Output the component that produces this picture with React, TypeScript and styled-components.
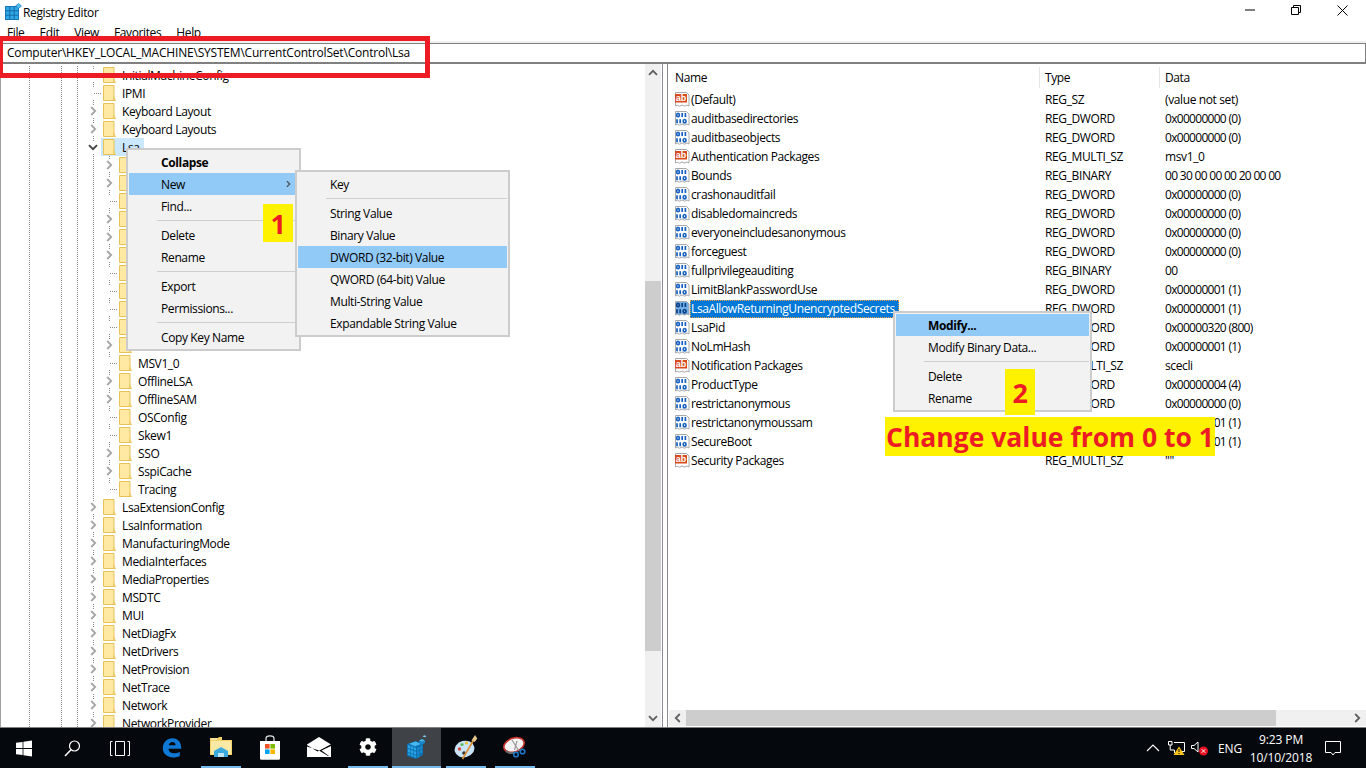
import styled, { createGlobalStyle, css } from 'styled-components';
import { FaCog } from 'react-icons/fa';

const uiFont = `'Open Sans', 'Noto Sans', sans-serif`;

const GlobalStyle = createGlobalStyle`
  html, body {
    margin: 0;
    padding: 0;
    background: #fff;
  }
  body {
    font-family: ${uiFont};
    font-size: 12px;
    letter-spacing: -0.38px;
    color: #000;
    overflow: hidden;
  }
`;

type TreeRow = {
  label: string;
  level: 1 | 2;
  kind: 'closed' | 'open' | 'leaf';
  selected?: boolean;
  last?: boolean;
};

const level1 = (label: string, kind: TreeRow['kind'] = 'closed'): TreeRow => ({ label, level: 1, kind });
const level2 = (label: string, kind: TreeRow['kind'] = 'closed'): TreeRow => ({ label, level: 2, kind });

const treeRows: TreeRow[] = [
  level1('InitialMachineConfig', 'leaf'),
  level1('IPMI', 'leaf'),
  level1('Keyboard Layout'),
  level1('Keyboard Layouts'),
  { label: 'Lsa', level: 1, kind: 'open', selected: true },
  // these keys sit behind the context menu, only the folders peek out
  level2(''),
  level2(''),
  level2('', 'leaf'),
  level2(''),
  level2(''),
  level2(''),
  level2('', 'leaf'),
  level2('', 'leaf'),
  level2('', 'leaf'),
  level2('', 'leaf'),
  level2(''),
  level2('MSV1_0', 'leaf'),
  level2('OfflineLSA'),
  level2('OfflineSAM'),
  level2('OSConfig', 'leaf'),
  level2('Skew1', 'leaf'),
  level2('SSO'),
  level2('SspiCache'),
  { label: 'Tracing', level: 2, kind: 'leaf', last: true },
  level1('LsaExtensionConfig'),
  level1('LsaInformation'),
  level1('ManufacturingMode'),
  level1('MediaInterfaces'),
  level1('MediaProperties'),
  level1('MSDTC'),
  level1('MUI'),
  level1('NetDiagFx'),
  level1('NetDrivers'),
  level1('NetProvision'),
  level1('NetTrace'),
  level1('Network'),
  level1('NetworkProvider'),
];

type ValueRow = { name: string; type: string; data: string; selected?: boolean };

const DWORD = 'REG_DWORD';
const values: ValueRow[] = [
  { name: '(Default)', type: 'REG_SZ', data: '(value not set)' },
  { name: 'auditbasedirectories', type: DWORD, data: '0x00000000 (0)' },
  { name: 'auditbaseobjects', type: DWORD, data: '0x00000000 (0)' },
  { name: 'Authentication Packages', type: 'REG_MULTI_SZ', data: 'msv1_0' },
  { name: 'Bounds', type: 'REG_BINARY', data: '00 30 00 00 00 20 00 00' },
  { name: 'crashonauditfail', type: DWORD, data: '0x00000000 (0)' },
  { name: 'disabledomaincreds', type: DWORD, data: '0x00000000 (0)' },
  { name: 'everyoneincludesanonymous', type: DWORD, data: '0x00000000 (0)' },
  { name: 'forceguest', type: DWORD, data: '0x00000000 (0)' },
  { name: 'fullprivilegeauditing', type: 'REG_BINARY', data: '00' },
  { name: 'LimitBlankPasswordUse', type: DWORD, data: '0x00000001 (1)' },
  { name: 'LsaAllowReturningUnencryptedSecrets', type: DWORD, data: '0x00000001 (1)', selected: true },
  { name: 'LsaPid', type: DWORD, data: '0x00000320 (800)' },
  { name: 'NoLmHash', type: DWORD, data: '0x00000001 (1)' },
  { name: 'Notification Packages', type: 'REG_MULTI_SZ', data: 'scecli' },
  { name: 'ProductType', type: DWORD, data: '0x00000004 (4)' },
  { name: 'restrictanonymous', type: DWORD, data: '0x00000000 (0)' },
  { name: 'restrictanonymoussam', type: DWORD, data: '0x00000001 (1)' },
  { name: 'SecureBoot', type: DWORD, data: '0x00000001 (1)' },
  { name: 'Security Packages', type: 'REG_MULTI_SZ', data: '""' },
];

const isStringType = (type: string) => type === 'REG_SZ' || type === 'REG_MULTI_SZ';
// the digits of this font run wider than the letters, so hex values get tighter tracking
const isHexValue = (data: string) => /^(0x|00)/.test(data);

const guidesFor = (row: TreeRow) => {
  const guides: { x: number; half?: boolean }[] = [{ x: 29 }, { x: 61 }, { x: 77 }, { x: 93 }];
  if (row.level === 2) guides.push({ x: 109, half: row.last });
  return guides;
};

const RegistryIcon = () => (
  <svg width="18" height="18" viewBox="0 0 18 18">
    <rect x="0.5" y="3.5" width="13" height="13" fill="#2fa8e8" stroke="#1a78b4" />
    <path d="M4.8 3.5v13M9.2 3.5v13M.5 7.8h13M.5 12.2h13" stroke="#156aa6" />
    <path d="M13.5.5l3 2.5-3 2.5-3-2.5z" fill="#4dbdf2" stroke="#1a78b4" strokeWidth="0.7" />
  </svg>
);

const RegeditTaskIcon = () => (
  <svg width="22" height="24" viewBox="0 0 22 24">
    <path d="M1 9l9-3 7 3v11l-7 4-9-3z" fill="#0f6fae" />
    <g fill="#27a4e6">
      <path d="M2 10l2.300.8v3l-2.300-.8zM5 11l2.300.8v3L5 14zM8 12l2 .7v3l-2-.7zM2 14l2.300.8v3l-2.300-.8zM5 15l2.300.8v3L5 18zM8 16l2 .7v3l-2-.7zM2 18l2.300.8v1.800L2 19.800zM5 19l2.300.8v2L5 21zM8 20l2 .7v2l-2-.7z" />
      <path d="M11 12.700l2.500-1v3l-2.500 1zM14 11.500l2.300-1v3l-2.300 1zM11 16.700l2.500-1v3l-2.500 1zM14 15.500l2.300-1v3l-2.300 1zM11 20.700l2.500-1v2l-2.500 1.300z" fill="#1788cc" />
    </g>
    <path d="M3 8.800l6.500-2.200 5.500 2.400-6 2.300z" fill="#45b8f0" />
    <path d="M13 5.500l3-1.500 3 1.500-3 1.500z" fill="#45b8f0" />
    <path d="M13 5.500v2.500l3 1.500V7zM19 5.500V8l-3 1.500V7z" fill="#1788cc" />
    <path d="M16.500 1.200l2-1 2 1-2 1z" fill="#7fd0f6" />
  </svg>
);

const FolderIcon = () => (
  <svg width="13" height="16" viewBox="0 0 13 16">
    <path d="M.5.5h10.500v12.500l1.500 2.500H.5z" fill="#ffe9a3" stroke="#e6c257" />
    <path d="M10 11.500h1.500v3.800H10z" fill="#f0cd68" />
  </svg>
);

const ChevronRight = ({ color = '#a6a6a6' }: { color?: string }) => (
  <svg width="7" height="10" viewBox="0 0 7 10">
    <path d="M1.200 1l4 4-4 4" fill="none" stroke={color} strokeWidth="1.800" />
  </svg>
);

const ChevronDown = ({ color = '#404040' }: { color?: string }) => (
  <svg width="10" height="7" viewBox="0 0 10 7">
    <path d="M1 1.200l4 4 4-4" fill="none" stroke={color} strokeWidth="1.800" />
  </svg>
);

const ChevronUp = () => (
  <svg width="10" height="7" viewBox="0 0 10 7">
    <path d="M1 5.800l4-4 4 4" fill="none" stroke="#606060" strokeWidth="1.800" />
  </svg>
);

const ChevronLeft = () => (
  <svg width="7" height="10" viewBox="0 0 7 10">
    <path d="M5.800 1l-4 4 4 4" fill="none" stroke="#606060" strokeWidth="1.800" />
  </svg>
);

const PageShape = ({ fill = '#fff' }: { fill?: string }) => (
  <path d="M1.500.5h11l2.500 2.500v11l-2-1-2.500 1.200-2.500-1.200-2.500 1.200-2-1-2 .8z" fill={fill} stroke="#a8a8a8" />
);

const StringIcon = () => (
  <svg width="16" height="16" viewBox="0 0 16 16">
    <PageShape />
    <rect x="1" y="2" width="12" height="8.500" fill="#d8491e" />
    <text x="7" y="9.200" fontSize="9" fontWeight="700" textAnchor="middle" fill="#fff" fontFamily="'Liberation Sans', sans-serif" letterSpacing="0">
      ab
    </text>
  </svg>
);

const BinaryIcon = ({ selected }: { selected?: boolean }) => {
  const ink = selected ? '#0b3f86' : '#1560c0';
  return (
    <svg width="16" height="16" viewBox="0 0 16 16">
      <PageShape fill={selected ? '#73b0e6' : '#fff'} />
      <g fill="none" stroke={ink} strokeWidth="1.700">
        <ellipse cx="4" cy="4" rx="1.400" ry="1.700" />
        <path d="M8.200 2v4M11.400 2v4" />
        <path d="M3 8.200v4M6.200 8.200v4" />
        <ellipse cx="10.600" cy="10.200" rx="1.400" ry="1.700" />
      </g>
    </svg>
  );
};

const StartIcon = () => (
  <svg width="16" height="17" viewBox="0 0 16 16">
    <path d="M0 2.300l6.600-.9v6.200H0zM7.400 1.300L16 0v7.600H7.400zM0 8.400h6.600v6.200L0 13.700zM7.400 8.400H16V16l-8.600-1.300z" fill="#fff" />
  </svg>
);

const SearchIcon = () => (
  <svg width="17" height="17" viewBox="0 0 17 17">
    <circle cx="10.500" cy="6" r="5" fill="none" stroke="#fff" strokeWidth="1.200" />
    <path d="M7 9.700L1 16" stroke="#fff" strokeWidth="1.500" />
  </svg>
);

const TaskViewIcon = () => (
  <svg width="20" height="15" viewBox="0 0 20 15">
    <path d="M5.500.5h9v14h-9zM2.500.5h-2v14h2M17.500.5h2v14h-2" fill="none" stroke="#fff" />
  </svg>
);

const EdgeIcon = () => (
  <svg width="20" height="21" viewBox="0 0 20 20">
    <path
      fillRule="evenodd"
      d="M.8 10.500C1 4.500 5.500.6 10.600.8c5.400.2 8.800 4.200 8.700 10.400H6.600c0 4.400 6 6.200 11.200 3v4.200c-7.200 3.400-17.200 1-17-7.900zM6.800 7.800h6.800c0-2.200-1.300-3.400-3.200-3.400-1.900 0-3.300 1.300-3.600 3.400z"
      fill="#0f78d4"
    />
  </svg>
);

const ExplorerIcon = () => (
  <svg width="22" height="20" viewBox="0 0 22 20">
    <path d="M0 1h8l1-1h3v3h10v15H0z" fill="#f4d269" />
    <path d="M1 4h20v13H1z" fill="#fbe9a6" />
    <path d="M1 1.500h6v1H1z" fill="#fff4c8" />
    <path d="M4 20v-6l7-4 7 4v6h-4v-4H8v4z" fill="#3aa9e0" />
    <path d="M8 16h6v4H8z" fill="#bfe2f4" />
  </svg>
);

const StoreIcon = () => (
  <svg width="22" height="25" viewBox="0 0 22 25">
    <path d="M7 6V3.500C7 1.800 8.600.8 11 .8s4 1 4 2.700V6" fill="none" stroke="#e6e6e6" strokeWidth="1.200" />
    <path d="M1 6h20v17.500a1.200 1.200 0 0 1-1.200 1.200H2.200A1.200 1.200 0 0 1 1 23.500z" fill="#fff" />
    <rect x="6" y="9" width="4.600" height="4.600" fill="#f25022" />
    <rect x="11.400" y="9" width="4.600" height="4.600" fill="#7fba00" />
    <rect x="6" y="14.400" width="4.600" height="4.600" fill="#00a4ef" />
    <rect x="11.400" y="14.400" width="4.600" height="4.600" fill="#ffb900" />
  </svg>
);

const MailIcon = () => (
  <svg width="24" height="20" viewBox="0 0 24 20">
    <path d="M0 7.500L12 0l12 7.500V20H0z" fill="#fff" />
    <path d="M0 8l10.500 6.500L24 7.200V9l-9.500 4.500L22 19h-1l-9-5.400L0 9.400z" fill="#000" />
  </svg>
);

const PaintIcon = () => (
  <svg width="24" height="25" viewBox="0 0 24 25">
    <ellipse cx="10.500" cy="14" rx="10" ry="8.200" fill="#c9e4f6" transform="rotate(-15 10.500 14)" />
    <circle cx="5.500" cy="14" r="1.700" fill="#d8493c" />
    <circle cx="8" cy="9.500" r="1.600" fill="#5cb85c" />
    <circle cx="12.500" cy="8" r="1.600" fill="#f1c232" />
    <circle cx="10" cy="18" r="1.800" fill="#333" />
    <path d="M8.500 24L19 6" stroke="#e0913a" strokeWidth="1.700" />
    <path d="M17.500 5.500L21 0l2.300 3.500-2.600 3.500z" fill="#e8c48a" />
  </svg>
);

const SnipIcon = () => (
  <svg width="24" height="22" viewBox="0 0 24 22">
    <ellipse cx="11" cy="9" rx="10.500" ry="6.800" fill="#f4f4f4" stroke="#c8352e" strokeWidth="1.600" transform="rotate(-20 11 9)" />
    <path d="M3 15c3 2.500 6 2.500 9 1.500" fill="none" stroke="#6a6a6a" strokeWidth="2" />
    <path d="M9 4l7 11M14 5l-2.500 9" stroke="#999" strokeWidth="1.200" />
    <circle cx="13" cy="18.500" r="2.300" fill="none" stroke="#1e78c8" strokeWidth="1.600" />
    <circle cx="19.500" cy="15.500" r="2.300" fill="none" stroke="#1e78c8" strokeWidth="1.600" />
  </svg>
);

const NetworkIcon = () => (
  <svg width="17" height="14" viewBox="0 0 17 14">
    <path d="M.5.5H4V4H.5zM6 1.500h10.500v9H9M2.200 4v5h4.300v3" fill="none" stroke="#fff" />
    <path d="M11 5.500l5.500 8.500h-11z" fill="#fcc419" />
    <path d="M11 8v3M11 12v1" stroke="#000" />
  </svg>
);

const VolumeIcon = () => (
  <svg width="18" height="15" viewBox="0 0 18 15">
    <path d="M.5 4.500H3L7 1v10L3 7.500H.5z" fill="none" stroke="#fff" />
    <circle cx="12.500" cy="10" r="4.500" fill="#e81123" />
    <path d="M10.700 8.200l3.600 3.600M14.300 8.200l-3.600 3.600" stroke="#fff" />
  </svg>
);

const BubbleIcon = () => (
  <svg width="16" height="15" viewBox="0 0 16 15">
    <path d="M.5.5h15v11H10l-2 2.500-2-2.500H.5z" fill="none" stroke="#fff" />
  </svg>
);

const taskButtons = [
  { icon: <EdgeIcon />, open: false, active: false },
  { icon: <ExplorerIcon />, open: true, active: false },
  { icon: <StoreIcon />, open: false, active: false },
  { icon: <MailIcon />, open: false, active: false },
  { icon: <FaCog size={18} color="#fff" />, open: true, active: false },
  { icon: <RegeditTaskIcon />, open: true, active: true },
  { icon: <PaintIcon />, open: true, active: false },
  { icon: <SnipIcon />, open: true, active: false },
];

const App = () => (
  <>
    <GlobalStyle />
    <Page>
      <TitleBar>
        <RegistryIcon />
        <span>Registry Editor</span>
        <WindowControls>
          <WindowButton>
            <svg width="10" height="10" viewBox="0 0 10 10">
              <path d="M0 5h10" stroke="#000" />
            </svg>
          </WindowButton>
          <WindowButton>
            <svg width="10" height="10" viewBox="0 0 10 10">
              <path d="M.5 2.500h7v7h-7zM2.500 2.500v-2h7v7h-2" fill="none" stroke="#000" />
            </svg>
          </WindowButton>
          <WindowButton>
            <svg width="11" height="11" viewBox="0 0 11 11">
              <path d="M.5.5l10 10M10.500.5l-10 10" stroke="#000" />
            </svg>
          </WindowButton>
        </WindowControls>
      </TitleBar>

      <MenuBar>
        <span>File</span>
        <span>Edit</span>
        <span>View</span>
        <span>Favorites</span>
        <span>Help</span>
      </MenuBar>

      <AddressBar>Computer\HKEY_LOCAL_MACHINE\SYSTEM\CurrentControlSet\Control\Lsa</AddressBar>

      <Split>
        <TreePane>
          <TreeList>
            {treeRows.map((row, i) => (
              <TreeItem key={i} $level={row.level} $guides={guidesFor(row)}>
                <Expander>
                  {row.kind === 'closed' && <ChevronRight />}
                  {row.kind === 'open' && <ChevronDown />}
                  {row.kind === 'leaf' && <LeafStub />}
                </Expander>
                <TreeBody $selected={row.selected}>
                  <FolderIcon />
                  {row.label && <TreeLabel>{row.label}</TreeLabel>}
                </TreeBody>
              </TreeItem>
            ))}
          </TreeList>
          <VScrollbar>
            <ScrollArrow>
              <ChevronUp />
            </ScrollArrow>
            <VThumb />
            <ScrollFill />
            <ScrollArrow>
              <ChevronDown color="#606060" />
            </ScrollArrow>
          </VScrollbar>
        </TreePane>

        <ListPane>
          <ListHeader>
            <HeaderCell $first>Name</HeaderCell>
            <HeaderCell>Type</HeaderCell>
            <HeaderCell>Data</HeaderCell>
          </ListHeader>
          <ListBody>
            {values.map((v) => (
              <ListRow key={v.name}>
                <NameCell>
                  {isStringType(v.type) ? <StringIcon /> : <BinaryIcon selected={v.selected} />}
                  <NameText $selected={v.selected}>{v.name}</NameText>
                </NameCell>
                <ValueCell>{v.type}</ValueCell>
                <ValueCell $tight={isHexValue(v.data)}>{v.data}</ValueCell>
              </ListRow>
            ))}
          </ListBody>
          <HScrollbar>
            <ScrollArrow>
              <ChevronLeft />
            </ScrollArrow>
            <HThumb />
            <ScrollFill />
            <ScrollArrow>
              <ChevronRight color="#606060" />
            </ScrollArrow>
          </HScrollbar>
        </ListPane>
      </Split>

      <Taskbar>
        <SystemButton>
          <StartIcon />
        </SystemButton>
        <SystemButton>
          <SearchIcon />
        </SystemButton>
        <SystemButton>
          <TaskViewIcon />
        </SystemButton>
        <TaskButtons>
          {taskButtons.map((b, i) => (
            <TaskButton key={i} $open={b.open} $active={b.active}>
              {b.icon}
            </TaskButton>
          ))}
        </TaskButtons>
        <Tray>
          <TraySlot $width={24}>
            <svg width="14" height="8" viewBox="0 0 14 8">
              <path d="M1 7l6-6 6 6" fill="none" stroke="#fff" strokeWidth="1.100" />
            </svg>
          </TraySlot>
          <TraySlot $width={23}>
            <NetworkIcon />
          </TraySlot>
          <TraySlot $width={24}>
            <VolumeIcon />
          </TraySlot>
          <TraySlot $width={36}>ENG</TraySlot>
          <Clock>
            <span>9:23 PM</span>
            <span>10/10/2018</span>
          </Clock>
          <TraySlot $width={38}>
            <BubbleIcon />
          </TraySlot>
        </Tray>
      </Taskbar>

      <ContextMenu $left={126} $top={148} $width={175}>
        <MenuItem $bold>Collapse</MenuItem>
        <MenuItem $active>
          New
          <MenuArrow>
            <ChevronRight color="#505050" />
          </MenuArrow>
        </MenuItem>
        <MenuItem>Find...</MenuItem>
        <MenuSeparator />
        <MenuItem>Delete</MenuItem>
        <MenuItem>Rename</MenuItem>
        <MenuSeparator />
        <MenuItem>Export</MenuItem>
        <MenuItem>Permissions...</MenuItem>
        <MenuSeparator />
        <MenuItem>Copy Key Name</MenuItem>
      </ContextMenu>

      <ContextMenu $left={295} $top={170} $width={215}>
        <MenuItem>Key</MenuItem>
        <MenuSeparator />
        <MenuItem>String Value</MenuItem>
        <MenuItem>Binary Value</MenuItem>
        <MenuItem $active>DWORD (32-bit) Value</MenuItem>
        <MenuItem>QWORD (64-bit) Value</MenuItem>
        <MenuItem>Multi-String Value</MenuItem>
        <MenuItem>Expandable String Value</MenuItem>
      </ContextMenu>

      <ContextMenu $left={893} $top={311} $width={199}>
        <MenuItem $active $bold>
          Modify...
        </MenuItem>
        <MenuItem>Modify Binary Data...</MenuItem>
        <MenuSeparator />
        <MenuItem>Delete</MenuItem>
        <MenuItem>Rename</MenuItem>
      </ContextMenu>

      <AddressHighlight />
      <StepBadge $left={263} $top={204} $height={38}>
        1
      </StepBadge>
      <StepBadge $left={1005} $top={369} $height={46}>
        2
      </StepBadge>
      <Banner>Change value from 0 to 1</Banner>
    </Page>
  </>
);

const Page = styled.div`
  position: relative;
  display: flex;
  flex-direction: column;
  width: 1366px;
  height: 768px;
  overflow: hidden;
  background: #fff;
`;

const TitleBar = styled.div`
  display: flex;
  align-items: center;
  flex: 0 0 24px;
  padding-left: 5px;
`;

const WindowControls = styled.div`
  display: flex;
  margin-left: auto;
  margin-right: 1px;
  align-self: flex-start;
`;

const WindowButton = styled.div`
  display: flex;
  align-items: center;
  justify-content: center;
  width: 46px;
  height: 20px;
`;

const MenuBar = styled.div`
  display: flex;
  flex: 0 0 19px;
  min-height: 0;
  align-items: center;
  gap: 15px;
  padding: 1px 0 0 7px;
  box-sizing: border-box;
  border-bottom: 2px solid #f0f0f0;
  line-height: 16px;
`;

const AddressBar = styled.div`
  display: flex;
  align-items: center;
  flex: 0 0 21px;
  min-height: 0;
  box-sizing: border-box;
  padding-left: 6px;
  border: 1px solid #808080;
  border-bottom-width: 2px;
  line-height: 16px;
  letter-spacing: -0.2px;
`;

const Split = styled.div`
  display: flex;
  flex: 1;
  min-height: 0;
  border-bottom: 1px solid #808080;
`;

const TreePane = styled.div`
  display: flex;
  width: 663px;
  box-sizing: border-box;
  border-left: 1px solid #a0a0a0;
  border-right: 1px solid #8c8c96;
`;

const TreeList = styled.div`
  flex: 1;
  min-width: 0;
  padding-top: 2px;
  overflow: hidden;
`;

const TreeItem = styled.div<{ $level: number; $guides: { x: number; half?: boolean }[] }>`
  display: flex;
  align-items: center;
  height: 18px;
  padding-left: ${({ $level }) => ($level === 1 ? 84 : 100)}px;
  white-space: nowrap;
  background-repeat: no-repeat;
  ${({ $guides }) => css`
    background-image: ${$guides
      .map(() => 'repeating-linear-gradient(#8a8a8a 0 1px, transparent 1px 2px)')
      .join(',')};
    background-position: ${$guides.map((g) => `${g.x - 1}px 0`).join(',')};
    background-size: ${$guides.map((g) => `1px ${g.half ? 9 : 18}px`).join(',')};
  `}
`;

const Expander = styled.span`
  display: flex;
  align-items: center;
  justify-content: center;
  flex: 0 0 16px;
  height: 12px;
  background: #fff;
`;

const LeafStub = styled.span`
  width: 7px;
  margin-left: 8px;
  border-top: 1px dotted #8a8a8a;
`;

const TreeBody = styled.span<{ $selected?: boolean }>`
  display: flex;
  align-items: center;
  height: 18px;
  padding: 0 4px 0 2px;
  ${({ $selected }) => $selected && 'background: #cce8ff;'}
`;

const TreeLabel = styled.span`
  margin-left: 6px;
`;

const VScrollbar = styled.div`
  display: flex;
  flex-direction: column;
  flex: 0 0 16px;
  margin-right: 1px;
  background: #f0f0f0;
`;

const ScrollArrow = styled.div`
  display: flex;
  align-items: center;
  justify-content: center;
  flex: 0 0 17px;
  min-height: 16px;
`;

const VThumb = styled.div`
  flex: 0 0 370px;
  margin-top: 200px;
  background: #cdcdcd;
`;

const ScrollFill = styled.div`
  flex: 1;
`;

const ListPane = styled.div`
  display: flex;
  flex-direction: column;
  flex: 1;
  min-width: 0;
  margin-left: 4px;
  border-left: 1px solid #8c8c96;
`;

const ListHeader = styled.div`
  display: grid;
  grid-template-columns: 371px 120px 1fr;
  flex: 0 0 26px;
  padding-top: 3px;
  box-sizing: border-box;
`;

const HeaderCell = styled.div<{ $first?: boolean }>`
  display: flex;
  align-items: center;
  height: 21px;
  ${({ $first }) => ($first ? 'padding-left: 7px;' : 'padding-left: 5px; border-left: 1px solid #e5e5e5;')}
`;

const ListBody = styled.div`
  flex: 1;
  min-height: 0;
`;

const ListRow = styled.div`
  display: grid;
  grid-template-columns: 371px 120px 1fr;
  align-items: center;
  height: 19px;
`;

const NameCell = styled.div`
  display: flex;
  align-items: center;
  padding-left: 6px;
  white-space: nowrap;
`;

const NameText = styled.span<{ $selected?: boolean }>`
  display: inline-flex;
  align-items: center;
  height: 18px;
  padding: 0 1px;
  box-sizing: border-box;
  ${({ $selected }) =>
    $selected &&
    css`
      padding: 0 4px 0 1px;
      background: #0078d7;
      color: #fff;
      outline: 1px dotted #f0a040;
      outline-offset: -1px;
    `}
`;

const ValueCell = styled.div<{ $tight?: boolean }>`
  padding-left: 6px;
  white-space: nowrap;
  letter-spacing: ${({ $tight }) => ($tight ? -0.7 : -0.38)}px;
`;

const HScrollbar = styled.div`
  display: flex;
  flex: 0 0 16px;
  margin: 0 0 1px 1px;
  background: #f0f0f0;
`;

const HThumb = styled.div`
  flex: 0 0 590px;
  background: #cdcdcd;
`;

const Taskbar = styled.div`
  display: flex;
  flex: 0 0 40px;
  background: #05080d;
  color: #fff;
  letter-spacing: -0.1px;
`;

const SystemButton = styled.div`
  display: flex;
  align-items: center;
  justify-content: center;
  width: 48px;
`;

const TaskButtons = styled.div`
  display: flex;
  margin-left: 3px;
`;

const TaskButton = styled.div<{ $open: boolean; $active: boolean }>`
  display: flex;
  align-items: center;
  justify-content: center;
  box-sizing: border-box;
  width: 49px;
  padding-bottom: 2px;
  background-repeat: no-repeat;
  background-position: center bottom;
  ${({ $open, $active }) =>
    $open &&
    css`
      background-image: linear-gradient(#76b9ed, #76b9ed);
      background-size: ${$active ? 49 : 40}px 2px;
    `}
  ${({ $active }) => $active && 'background-color: #3f4347;'}
`;

const Tray = styled.div`
  display: flex;
  align-items: center;
  margin-left: auto;
  margin-right: 14px;
`;

const TraySlot = styled.div<{ $width: number }>`
  display: flex;
  align-items: center;
  justify-content: center;
  width: ${({ $width }) => $width}px;
`;

const Clock = styled.div`
  display: flex;
  flex-direction: column;
  align-items: center;
  width: 66px;
  padding-top: 2px;
  line-height: 18px;
`;

const ContextMenu = styled.div<{ $left: number; $top: number; $width: number }>`
  position: absolute;
  left: ${({ $left }) => $left}px;
  top: ${({ $top }) => $top}px;
  width: ${({ $width }) => $width}px;
  box-sizing: border-box;
  padding: 1px;
  border: 2px solid #cccccc;
  background: #f2f2f2;
`;

const MenuItem = styled.div<{ $active?: boolean; $bold?: boolean }>`
  display: flex;
  align-items: center;
  height: 22px;
  padding-left: 32px;
  white-space: nowrap;
  ${({ $active }) => $active && 'background: #91c9f7;'}
  ${({ $bold }) => $bold && 'font-weight: 700;'}
`;

const MenuArrow = styled.span`
  display: flex;
  margin-left: auto;
  margin-right: 7px;
  svg {
    width: 5px;
    height: 8px;
  }
`;

const MenuSeparator = styled.div`
  height: 1px;
  margin: 3px 0 3px 28px;
  background: #cfcfcf;
`;

const annotationRed = '#ed1c24';
const annotationYellow = '#fff200';

const AddressHighlight = styled.div`
  position: absolute;
  left: -2px;
  top: 36px;
  width: 432px;
  height: 42px;
  box-sizing: border-box;
  border: 5px solid ${annotationRed};
`;

const StepBadge = styled.div<{ $left: number; $top: number; $height: number }>`
  position: absolute;
  left: ${({ $left }) => $left}px;
  top: ${({ $top }) => $top}px;
  display: flex;
  align-items: center;
  justify-content: center;
  width: 30px;
  height: ${({ $height }) => $height}px;
  background: ${annotationYellow};
  color: ${annotationRed};
  font-size: 27px;
  font-weight: 700;
`;

const Banner = styled.div`
  position: absolute;
  left: 885px;
  top: 417px;
  display: flex;
  align-items: center;
  justify-content: center;
  width: 330px;
  height: 39px;
  background: ${annotationYellow};
  color: ${annotationRed};
  font-size: 26.5px;
  font-weight: 700;
  letter-spacing: 0;
  white-space: nowrap;
`;

export default App;
